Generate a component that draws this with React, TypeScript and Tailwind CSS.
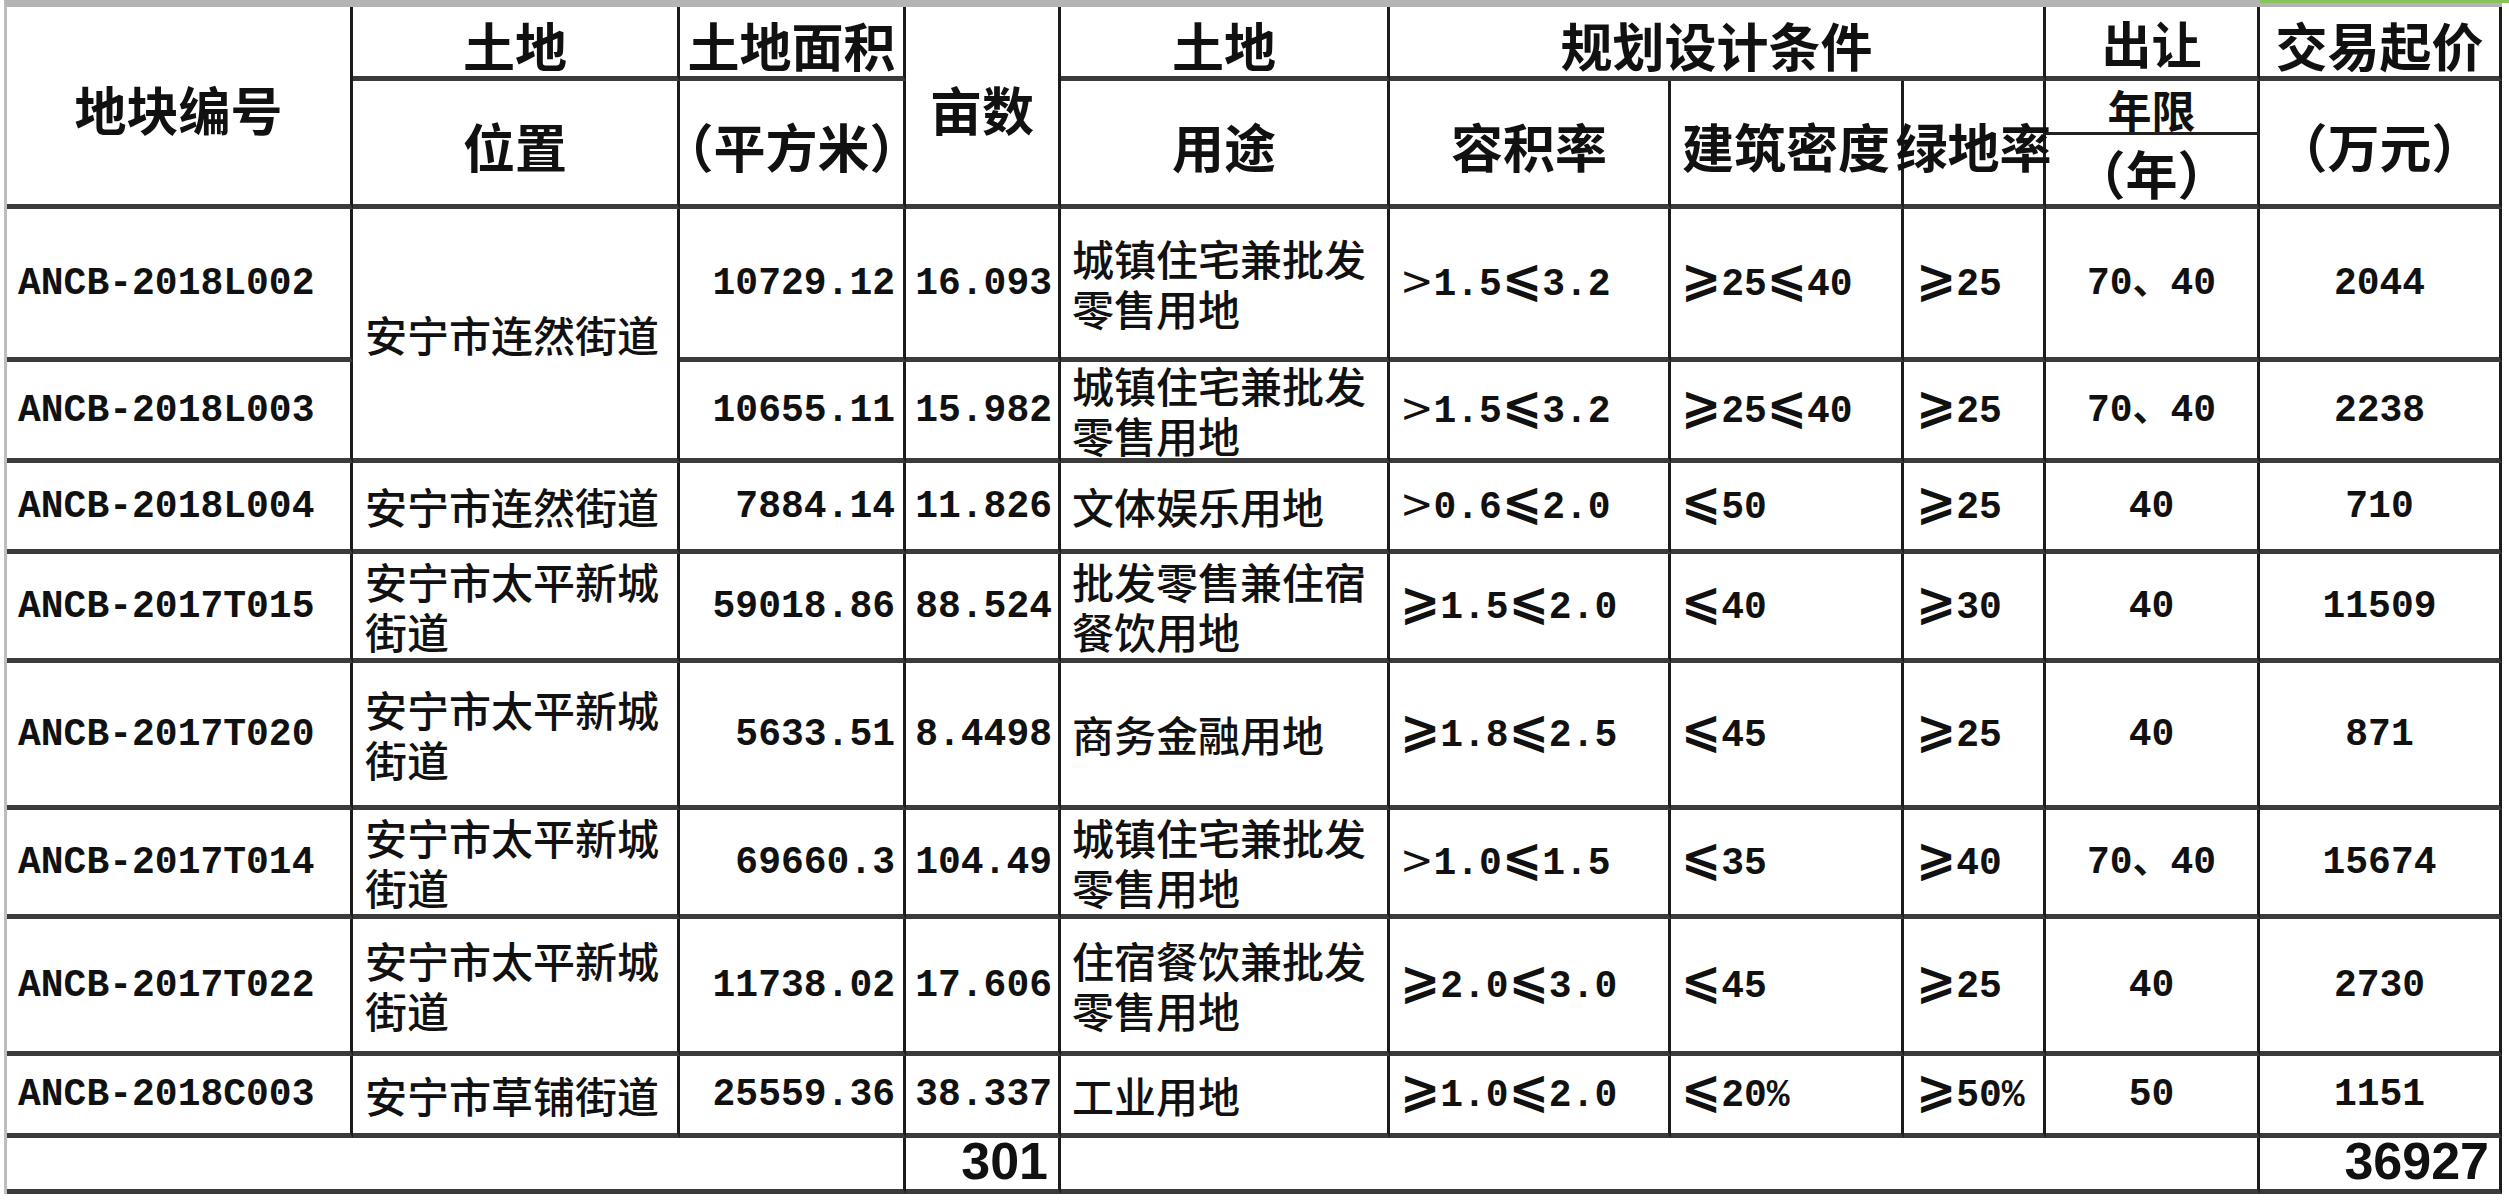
import React from 'react';

// one land parcel per row; loc is null where the cell above is merged into it
type Parcel = {
  id: string;
  loc: string | null;
  area: string;
  mu: string;
  use: string;
  far: string;
  density: string;
  green: string;
  years: string;
  price: string;
};

const parcels: Parcel[] = [
  { id: 'ANCB-2018L002', loc: '安宁市连然街道', area: '10729.12', mu: '16.093', use: '城镇住宅兼批发零售用地', far: '>1.5⩽3.2', density: '⩾25⩽40', green: '⩾25', years: '70、40', price: '2044' },
  { id: 'ANCB-2018L003', loc: null, area: '10655.11', mu: '15.982', use: '城镇住宅兼批发零售用地', far: '>1.5⩽3.2', density: '⩾25⩽40', green: '⩾25', years: '70、40', price: '2238' },
  { id: 'ANCB-2018L004', loc: '安宁市连然街道', area: '7884.14', mu: '11.826', use: '文体娱乐用地', far: '>0.6⩽2.0', density: '⩽50', green: '⩾25', years: '40', price: '710' },
  { id: 'ANCB-2017T015', loc: '安宁市太平新城街道', area: '59018.86', mu: '88.524', use: '批发零售兼住宿餐饮用地', far: '⩾1.5⩽2.0', density: '⩽40', green: '⩾30', years: '40', price: '11509' },
  { id: 'ANCB-2017T020', loc: '安宁市太平新城街道', area: '5633.51', mu: '8.4498', use: '商务金融用地', far: '⩾1.8⩽2.5', density: '⩽45', green: '⩾25', years: '40', price: '871' },
  { id: 'ANCB-2017T014', loc: '安宁市太平新城街道', area: '69660.3', mu: '104.49', use: '城镇住宅兼批发零售用地', far: '>1.0⩽1.5', density: '⩽35', green: '⩾40', years: '70、40', price: '15674' },
  { id: 'ANCB-2017T022', loc: '安宁市太平新城街道', area: '11738.02', mu: '17.606', use: '住宿餐饮兼批发零售用地', far: '⩾2.0⩽3.0', density: '⩽45', green: '⩾25', years: '40', price: '2730' },
  { id: 'ANCB-2018C003', loc: '安宁市草铺街道', area: '25559.36', mu: '38.337', use: '工业用地', far: '⩾1.0⩽2.0', density: '⩽20%', green: '⩾50%', years: '50', price: '1151' },
];

// grid lines: thin dark verticals, heavy grey horizontals
const cell = "flex items-center border-r-[3px] border-r-[#1c1c1c] border-b-[5px] border-b-[#3b3b3b] text-[#111] overflow-visible";
const headText = "font-['Noto_Sans_CJK_SC',sans-serif] font-bold leading-none whitespace-nowrap";
const head = `${cell} justify-center pt-[6px] text-[52px] ${headText}`;
const cjk = "font-['Noto_Sans_CJK_SC',sans-serif] text-[42px] font-medium leading-[50px]";
const mono = "font-['Liberation_Mono','DejaVu_Sans','Noto_Sans_CJK_SC',monospace] text-[38px] font-bold whitespace-nowrap";
const total = "justify-end items-end pb-[2px] pr-[10px] font-['Liberation_Sans',sans-serif] text-[52px] font-bold leading-none";

// the comparison signs are drawn larger than the digits, as in the sheet
function Val({ text }: { text: string }) {
  return (
    <span>
      {text.split(/([⩽⩾>])/).map((s, i) => {
        if (s === '⩽' || s === '⩾') return <span key={i} className="font-['DejaVu_Sans',sans-serif] text-[48px] leading-none">{s}</span>;
        if (s === '>') return <span key={i} className="font-['DejaVu_Sans',sans-serif] text-[40px] font-normal leading-none">{s}</span>;
        return s;
      })}
    </span>
  );
}

export default function App() {
  return (
    <div className="min-h-screen w-full bg-white">
      <div className="relative ml-[4px] w-[2498px] border-l-[3px] border-l-[#bdbdbd] border-t-[7px] border-t-[#b4b4b4]">
        {/* selected-cell marker on the price column */}
        <div className="absolute -top-[7px] left-[2253px] h-[3px] w-[252px] bg-[#86c45a]" />

        <div className="grid grid-cols-[346px_327px_226px_155px_329px_281px_233px_142px_214px_242px] grid-rows-[74px_54px_74px_153px_101px_91px_109px_147px_109px_137px_82px_56px]">
          {/* header, first line */}
          <div className={`${head} row-span-3`}>地块编号</div>
          <div className={head}>土地</div>
          <div className={head}>土地面积</div>
          <div className={`${head} row-span-3`}>亩数</div>
          <div className={head}>土地</div>
          <div className={`${head} col-span-3`}>规划设计条件</div>
          <div className={`${cell} justify-center text-[50px] ${headText}`}>出让</div>
          <div className={head}>交易起价</div>

          {/* header, second line */}
          <div className={`${head} row-span-2`}>位置</div>
          <div className={`${head} row-span-2`}>（平方米）</div>
          <div className={`${head} row-span-2`}>用途</div>
          <div className={`${head} row-span-2`}>容积率</div>
          <div className={`${head} row-span-2`}>建筑密度</div>
          <div className={`${head} row-span-2`}>绿地率</div>
          <div className={`${cell} justify-center pt-[4px] border-b-[3px]! border-b-[#222]! text-[44px] ${headText}`}>年限</div>
          <div className={`${head} row-span-2`}>（万元）</div>
          <div className={head}>（年）</div>

          {parcels.map((p, i) => (
            <React.Fragment key={p.id}>
              <div className={`${cell} ${mono} pl-[11px]`}>{p.id}</div>
              {p.loc !== null && (
                <div className={`${cell} ${cjk} pl-[12px] pr-[4px] ${i === 0 ? 'row-span-2' : ''}`}>
                  <div>{p.loc}</div>
                </div>
              )}
              <div className={`${cell} ${mono} justify-end pr-[8px]`}>{p.area}</div>
              <div className={`${cell} ${mono} justify-end pr-[6px]`}>{p.mu}</div>
              <div className={`${cell} ${cjk} pl-[11px] pr-[4px]`}>
                <div>{p.use}</div>
              </div>
              <div className={`${cell} ${mono} pl-[10px]`}><Val text={p.far} /></div>
              <div className={`${cell} ${mono} pl-[10px]`}><Val text={p.density} /></div>
              <div className={`${cell} ${mono} pl-[12px]`}><Val text={p.green} /></div>
              <div className={`${cell} ${mono} justify-center`}>{p.years}</div>
              <div className={`${cell} ${mono} justify-center`}>{p.price}</div>
            </React.Fragment>
          ))}

          {/* totals */}
          <div className="col-span-3 border-b-[5px] border-b-[#3b3b3b] border-r-[3px] border-r-[#1c1c1c]" />
          <div className={`${cell} ${total}`}>301</div>
          <div className="col-span-5 border-b-[5px] border-b-[#3b3b3b] border-r-[3px] border-r-[#1c1c1c]" />
          <div className={`${cell} ${total}`}>36927</div>
        </div>
      </div>
    </div>
  );
}
